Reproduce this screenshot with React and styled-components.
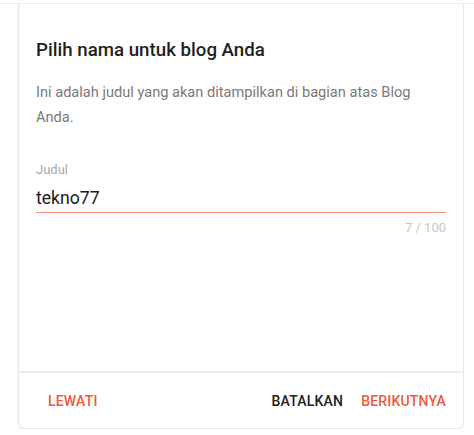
import React from "react";
import styled, { createGlobalStyle } from "styled-components";

const GlobalStyle = createGlobalStyle`
  html, body {
    margin: 0;
    padding: 0;
    background: #ffffff;
    font-family: Roboto, "Liberation Sans", Arial, sans-serif;
  }
`;

const TopEdge = styled.div`
  height: 3px;
  border-bottom: 1px solid #f0f0f0;
`;

const Card = styled.div`
  margin-left: 18px;
  width: 444px;
  border: 1px solid #e6e6e6;
  border-top: none;
  border-radius: 0 0 6px 6px;
  box-shadow: 0 1px 2px rgba(0, 0, 0, 0.04);
`;

const Body = styled.div`
  height: 367px;
  padding: 0 17px;
  box-sizing: border-box;
  display: flex;
  flex-direction: column;
`;

const Title = styled.h2`
  margin: 34px 0 0;
  font-size: 18.7px;
  line-height: 24px;
  font-weight: 500;
  color: #1f1f1f;
`;

const Description = styled.p`
  margin: 18px 0 0;
  font-size: 14.6px;
  line-height: 25px;
  color: #7a7a7a;
`;

const Field = styled.div`
  margin-top: 32px;
  display: flex;
  flex-direction: column;
`;

const Label = styled.label`
  font-size: 13px;
  line-height: 16px;
  color: #aaaaaa;
`;

const InputLine = styled.div`
  margin-top: 8px;
  height: 26px;
  border-bottom: 1px solid #f28b7c;
  display: flex;
  align-items: flex-start;
`;

const Input = styled.input`
  appearance: none;
  width: 100%;
  padding: 0;
  margin: 0;
  border: 0;
  outline: none;
  font-family: inherit;
  font-size: 17.6px;
  line-height: 24px;
  height: 24px;
  color: #1a1a1a;
  background: transparent;
`;

const Counter = styled.div`
  margin-top: 7px;
  align-self: flex-end;
  font-size: 13px;
  line-height: 16px;
  color: #c6c6c6;
`;

const Footer = styled.div`
  height: 55px;
  border-top: 2px solid #ececec;
  padding: 0 17px 0 29px;
  display: flex;
  align-items: center;
  justify-content: space-between;
`;

const Actions = styled.div`
  display: flex;
  gap: 18px;
`;

const TextButton = styled.button`
  border: none;
  background: none;
  padding: 0;
  font-family: inherit;
  font-size: 14px;
  font-weight: 500;
  letter-spacing: 0.2px;
  text-transform: uppercase;
  color: ${(p) => (p.$accent ? "#f0583a" : "#212121")};
  cursor: pointer;
`;

export default function App() {
  const value = "tekno77";
  return (
    <>
      <GlobalStyle />
      <TopEdge />
      <Card>
        <Body>
          <Title>Pilih nama untuk blog Anda</Title>
          <Description>
            Ini adalah judul yang akan ditampilkan di bagian atas Blog Anda.
          </Description>
          <Field>
            <Label>Judul</Label>
            <InputLine>
              <Input defaultValue={value} />
            </InputLine>
            <Counter>{value.length} / 100</Counter>
          </Field>
        </Body>
        <Footer>
          <TextButton $accent>Lewati</TextButton>
          <Actions>
            <TextButton>Batalkan</TextButton>
            <TextButton $accent>Berikutnya</TextButton>
          </Actions>
        </Footer>
      </Card>
    </>
  );
}
